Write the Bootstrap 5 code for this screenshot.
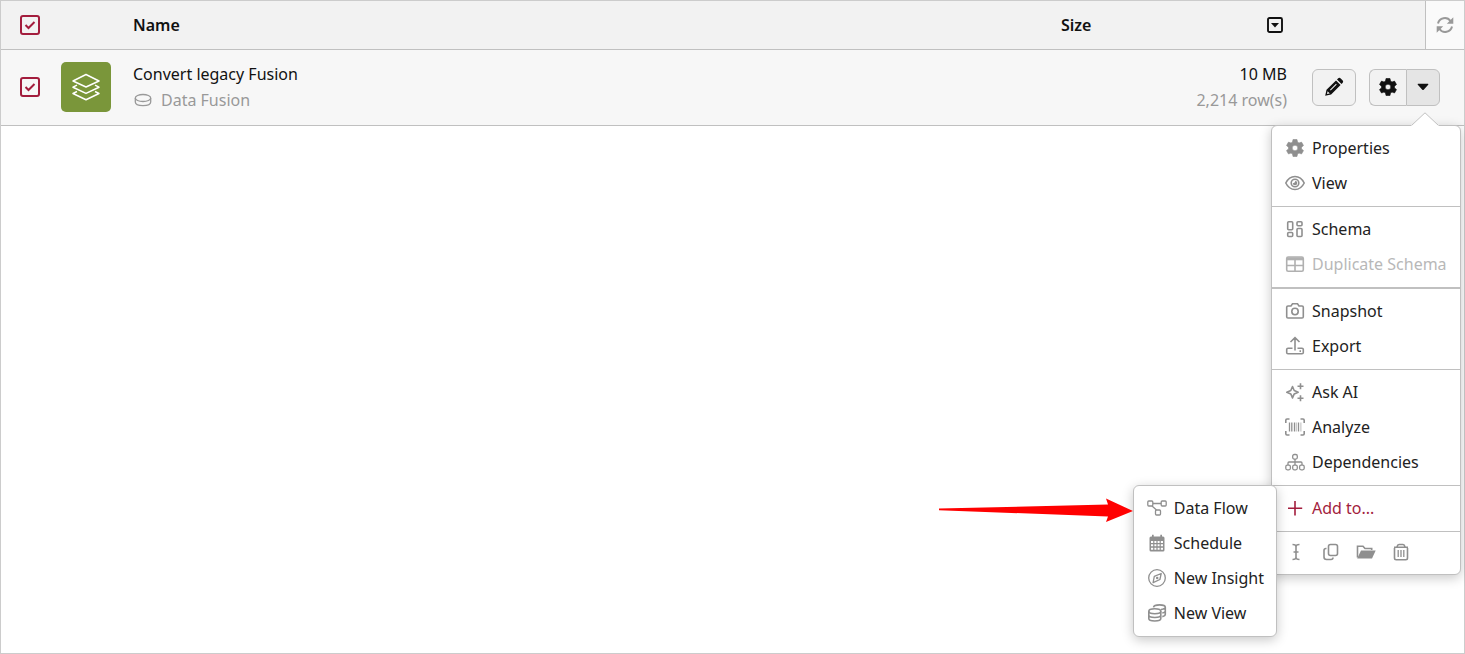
<!DOCTYPE html>
<html lang="en">
<head>
<meta charset="utf-8">
<meta name="viewport" content="width=device-width, initial-scale=1">
<title>Datasets</title>
<link href="https://cdn.jsdelivr.net/npm/bootstrap@5.3.0/dist/css/bootstrap.min.css" rel="stylesheet">
<style>
  :root { --line: #c0c0c0; --ink: #111; --quiet: #999; --accent: #a31d3d; }
  body { font-family: "Noto Sans", "Open Sans", sans-serif; font-size: 16px; line-height: 26px; color: var(--ink); }
  svg { display: block; flex: none; }
  .ico { width: 20px; height: 20px; fill: none; stroke: currentColor; stroke-width: 1.6; }
  .fine { stroke-width: 1.3; }
  .solid { fill: currentColor; stroke: none; }
  .pane { border: 1px solid #ccc; }
  .data-list { table-layout: fixed; color: var(--ink); }
  .data-list > * > tr > * { padding: 0; vertical-align: middle; background: #f7f7f7; border-bottom: 1px solid var(--line); box-shadow: none; color: var(--ink); }
  .data-list thead th { height: 48px; background: #f2f2f2; font-weight: 600; }
  .data-list tbody td { height: 76px; }
  .data-list .cell-refresh { background: #fafafa; border-left: 1px solid var(--line); }
  .col-tick { width: 60px; } .col-type { width: 72px; } .col-size { width: 226px; } .col-act { width: 138px; } .col-refresh { width: 39px; }
  .tick { appearance: none; display: block; width: 20px; height: 20px; margin: 0 0 0 19px; border: 2px solid var(--accent); border-radius: 3px; }
  .tick:checked { background: url("data:image/svg+xml,%3Csvg xmlns='http://www.w3.org/2000/svg' viewBox='0 0 16 16'%3E%3Cpath d='M3.5 8l3 3 6-6' fill='none' stroke='%23a31d3d' stroke-width='2'/%3E%3C/svg%3E") center / 16px; }
  .tile { width: 50px; height: 50px; border-radius: 5px; background: #7a963a; color: #fff; }
  .bare { padding: 0; border: 0; background: none; color: inherit; }
  .quiet { color: var(--quiet); }
  .tools { gap: 13px; }
  .tool { height: 37px; padding: 0; border: 1px solid var(--line); border-radius: 6px; background: #f2f2f2; color: var(--ink); }
  .tool.tool-open { background: #e5e5e5; }
  .tool-edit { width: 44px; } .tool-gear { width: 37px; } .tool-more { width: 34px; }
  .popup { position: absolute; background: #fff; border: 1px solid var(--line); border-radius: 6px; box-shadow: 0 3px 12px rgba(0,0,0,.22); white-space: nowrap; color: #222; }
  .popup-main { top: 56px; right: -21px; min-width: 190px; z-index: 5; }
  .popup-sub { top: -1px; right: calc(100% - 5px); min-width: 144px; z-index: 6; }
  .peak { position: absolute; top: -14px; right: 21px; }
  .group { padding: 5px 0; }
  .group + .group, .quick { border-top: 1px solid var(--line); }
  .group + .group-strong { border-top-width: 2px; }
  .entry { display: flex; align-items: center; gap: 7px; width: 100%; height: 35px; padding: 0 12px 0 13px; border: 0; background: none; color: inherit; text-align: left; }
  .entry .ico, .quick .ico { color: #8f8f8f; }
  .entry:disabled { color: #b8b8b8; } .entry:disabled .ico { color: #b0b0b0; }
  .entry-accent, .entry-accent .ico { color: var(--accent); }
  .quick { height: 43px; padding: 0 0 2px 6px; }
  .quick button { width: 35px; height: 35px; }
  .pointer { position: absolute; right: 100%; top: 12px; }
</style>
</head>
<body>
<svg width="0" height="0" class="position-absolute" aria-hidden="true">
  <symbol id="gear" viewBox="0 0 20 20"><path fill-rule="evenodd" d="M8 1.500h4l.5 2.600 1.500.9 2.500-.9 2 3.400-2 1.700v1.700l2 1.700-2 3.400-2.500-.9-1.500.9-.5 2.500H8l-.5-2.500L6 15.100l-2.500.9-2-3.400 2-1.700V9.200l-2-1.700 2-3.400L6 5l1.500-.9zM10 7.200a2.800 2.800 0 1 0 0 5.600 2.800 2.800 0 0 0 0-5.600z" stroke="currentColor" stroke-width=".6" stroke-linejoin="round"/></symbol>
</svg>
<main class="pane min-vh-100">
  <table class="table data-list mb-0 w-100">
    <colgroup><col class="col-tick"><col class="col-type"><col><col class="col-size"><col class="col-act"><col class="col-refresh"></colgroup>
    <thead>
      <tr>
        <th><input class="tick" type="checkbox" checked aria-label="Select all"></th>
        <th></th>
        <th scope="col">Name</th>
        <th scope="col"><div class="d-flex justify-content-between align-items-center pe-1">Size
          <button class="bare" type="button" aria-label="Filter size"><svg width="16" height="16" viewBox="0 0 16 16"><rect x="1" y="1" width="14" height="14" rx="1.500" fill="none" stroke="#111" stroke-width="1.900"/><path d="M4 6h8l-4 4.500z" fill="#111"/></svg></button></div></th>
        <th></th>
        <th class="cell-refresh"><button class="bare quiet d-block mx-auto" type="button" aria-label="Refresh"><svg width="18" height="18" viewBox="0 0 18 18" fill="none" stroke="currentColor" stroke-width="2"><path d="M2 7.500A7 7 0 0 1 14.500 5M16 10.500A7 7 0 0 1 3.500 13"/><path d="M17.300 1.200v6.500h-6.500zM.7 16.800v-6.500h6.500z" fill="currentColor" stroke="none"/></svg></button></th>
      </tr>
    </thead>
    <tbody>
      <tr>
        <td><input class="tick" type="checkbox" checked aria-label="Select Convert legacy Fusion"></td>
        <td><div class="tile d-flex align-items-center justify-content-center"><svg width="28" height="28" viewBox="0 0 28 28" fill="none" stroke="currentColor" stroke-width="1.500" stroke-linejoin="round"><path d="M14 1.500L27 8l-13 6L1 8z"/><path d="M5 12.200L1 14.200l13 6.200 13-6.200-4-2M5 18.500l-4 2 13 6.200 13-6.200-4-2"/></svg></div></td>
        <td><div>Convert legacy Fusion</div>
          <div class="quiet d-flex align-items-center gap-2"><svg class="ico fine" viewBox="0 0 20 20"><ellipse cx="10" cy="8" rx="7.700" ry="3.500"/><path d="M2.300 8v4c0 4.800 15.400 4.800 15.400 0V8"/></svg>Data Fusion</div></td>
        <td class="text-end"><div>10 MB</div><div class="quiet">2,214 row(s)</div></td>
        <td colspan="2">
          <div class="tools d-flex justify-content-end pe-4">
            <button class="tool tool-edit d-flex align-items-center justify-content-center" type="button" aria-label="Edit"><svg width="20" height="20" viewBox="0 0 20 20"><path fill="currentColor" fill-rule="evenodd" d="M1.200 18.800l1.300-6L12 3.400 16.600 8l-9.500 9.500zM3.600 14.200l-.6 2.800 2.800-.6zM6 12.700l.7.700 6-6-.7-.7zM13 2.500l1-1c.9-.9 1.900-.9 2.700 0l1.800 1.800c.9.800.9 1.800 0 2.700l-1 1z"/></svg></button>
            <div class="d-flex position-relative">
              <button class="tool tool-gear rounded-end-0 border-end-0 d-flex align-items-center justify-content-center" type="button" aria-label="Settings"><svg class="ico solid"><use href="#gear"/></svg></button>
              <button class="tool tool-more tool-open rounded-start-0 d-flex align-items-center justify-content-center" type="button" aria-label="More actions" aria-expanded="true"><svg width="12" height="8" viewBox="0 0 12 8"><path fill="currentColor" d="M1.200.8h9.600q1 .2.400 1L6.700 6.700q-.7.600-1.400 0L.8 1.800q-.6-.8.400-1z"/></svg></button>
              <div class="popup popup-main">
                <svg class="peak" width="28" height="15" viewBox="0 0 28 15"><path d="M0 13.500L14 .7l14 12.800V15H0z" fill="#fff"/><path d="M.5 13.500L14 .8l13.500 12.700" fill="none" stroke="#c0c0c0"/></svg>
                <div class="group">
                  <button class="entry" type="button"><svg class="ico solid"><use href="#gear"/></svg>Properties</button>
                  <button class="entry" type="button"><svg class="ico" viewBox="0 0 20 20"><path d="M.8 10C5 1.300 15 1.300 19.200 10 15 18.700 5 18.700.8 10z"/><circle cx="10" cy="10" r="3.800"/><path class="solid" d="M7.700 10.200a2.300 2.300 0 1 0 2.500-2.500c.2 1.500-.9 2.500-2.500 2.500z"/></svg>View</button>
                </div>
                <div class="group">
                  <button class="entry" type="button"><svg class="ico" viewBox="0 0 20 20"><rect x="2.700" y="2.700" width="5" height="8" rx="1"/><rect x="2.700" y="13.500" width="5" height="4" rx="1"/><rect x="12" y="2.700" width="5" height="4" rx="1"/><rect x="12" y="9.500" width="5" height="8" rx="1"/></svg>Schema</button>
                  <button class="entry" type="button" disabled><svg class="ico" viewBox="0 0 20 20"><rect x="1.700" y="3" width="16.600" height="14.300" rx="1.500"/><path d="M2 4.800h16" stroke-width="3"/><path d="M2 11.500h16M10 5v12"/></svg>Duplicate Schema</button>
                </div>
                <div class="group group-strong">
                  <button class="entry" type="button"><svg class="ico" viewBox="0 0 20 20"><path d="M3 5h3l1.500-2.300h5L14 5h3q1.300 0 1.300 1.300v9.400q0 1.300-1.300 1.300H3q-1.300 0-1.300-1.300V6.300Q1.700 5 3 5z"/><circle cx="10" cy="10.500" r="3.200"/></svg>Snapshot</button>
                  <button class="entry" type="button"><svg class="ico" viewBox="0 0 20 20"><path d="M10 14.500V2M5.500 6L10 1.700 14.500 6M7.500 12.300H3q-1.300 0-1.300 1.300v2.800q0 1.300 1.300 1.300h14q1.300 0 1.300-1.300v-2.800q0-1.300-1.300-1.300h-4.500"/><path d="M14.500 15.100h1.500"/></svg>Export</button>
                </div>
                <div class="group">
                  <button class="entry" type="button"><svg class="ico" viewBox="0 0 20 20"><path d="M7.500 4.500l1.700 4 4 1.700-4 1.700-1.700 4-1.700-4-4-1.700 4-1.700z" stroke-linejoin="round"/><path d="M15.500 1.200v6M12.500 4.200h6M15.500 13.200v6M12.500 16.200h6"/></svg>Ask AI</button>
                  <button class="entry" type="button"><svg class="ico" viewBox="0 0 20 20"><path d="M4.500 2H2Q.8 2 .8 3.200V6M15.500 2H18q1.200 0 1.200 1.200V6M.8 14v2.800Q.8 18 2 18h2.500M19.200 14v2.800q0 1.200-1.200 1.200h-2.500"/><path d="M4.500 5.500v9M6.800 5.500v9M9.500 5.500v9M13.500 5.500v9" stroke-width="1.300"/><path d="M15.900 5.500v9M11.300 5.500v9" stroke-width=".6"/></svg>Analyze</button>
                  <button class="entry" type="button"><svg class="ico fine" viewBox="0 0 20 20"><rect x="7.700" y="2.500" width="4.600" height="4.600" rx="1.500"/><rect x=".8" y="13.200" width="4.600" height="4.600" rx="1.500"/><rect x="7.700" y="13.200" width="4.600" height="4.600" rx="1.500"/><rect x="14.600" y="13.200" width="4.600" height="4.600" rx="1.500"/><path d="M10 7v6M3 13v-2q0-1 1-1h12q1 0 1 1v2"/></svg>Dependencies</button>
                </div>
                <div class="group position-relative">
                  <button class="entry entry-accent" type="button" aria-expanded="true"><svg class="ico" viewBox="0 0 20 20"><path d="M10 3v14.500M3 10.200h14.200"/></svg>Add to...</button>
                  <div class="popup popup-sub">
                    <svg class="pointer" width="196" height="26" viewBox="0 0 196 26" aria-hidden="true"><path d="M1 10.600L170 6.500l-2-6L195 13l-27 11 2-5.500L1 12.200z" fill="#f00"/></svg>
                    <div class="group">
                      <button class="entry" type="button"><svg class="ico fine" viewBox="0 0 20 20"><rect x=".8" y="3" width="5" height="5" rx="1"/><rect x="14.200" y="3" width="5" height="5" rx="1"/><rect x="8.500" y="12" width="5" height="5" rx="1"/><path d="M6 5.500h8M5 8l4.500 4"/></svg>Data Flow</button>
                      <button class="entry" type="button"><svg class="ico" viewBox="0 0 20 20"><path class="solid" fill-rule="evenodd" d="M2.500 5q0-1.500 1.500-1.500h1V1.700h1.700v1.800h6.600V1.700H15v1.800h1q1.500 0 1.500 1.500v12q0 1.500-1.500 1.500H4q-1.500 0-1.500-1.500zM4 8v2h2.200V8zm3.400 0v2h2V8zm3.200 0v2h2V8zm3.200 0v2H16V8zM4 11.300v2h2.200v-2zm3.400 0v2h2v-2zm3.200 0v2h2v-2zm3.200 0v2H16v-2zM4 14.700v2h2.200v-2zm3.400 0v2h2v-2zm3.200 0v2h2v-2zm3.200 0v2H16v-2z"/></svg>Schedule</button>
                      <button class="entry" type="button"><svg class="ico fine" viewBox="0 0 20 20"><circle cx="10" cy="10" r="8.300"/><path d="M14.200 5.500l-1.300 6-6.800 3.200 1.200-6.300z" stroke-linejoin="round"/><circle cx="10.200" cy="10" r=".6"/></svg>New Insight</button>
                      <button class="entry" type="button"><svg class="ico" viewBox="0 0 20 20"><ellipse cx="7.800" cy="8.300" rx="6" ry="2.500"/><path d="M1.800 8.300v7.200c0 3.300 12 3.300 12 0V8.300M1.800 12c0 3.300 12 3.300 12 0M6.500 4.300C7 1 18.300 1 18.300 4.300v7c0 1-1.500 2-3 2.300M6.500 4.300M14 6.500c2.500-.3 4.300-1 4.300-2.200M15.300 10c1.500-.3 3-1 3-2"/></svg>New View</button>
                    </div>
                  </div>
                </div>
                <div class="quick d-flex align-items-center">
                  <button class="bare d-flex align-items-center justify-content-center" type="button" aria-label="Rename"><svg class="ico" viewBox="0 0 20 20"><path d="M6.500 2.500c2.500 0 3.500.8 3.500 2v11c0 1.200-1 2-3.500 2M13.500 2.500c-2.500 0-3.500.8-3.500 2M10 15.500c0 1.200 1 2 3.500 2M7.500 10h5"/></svg></button>
                  <button class="bare d-flex align-items-center justify-content-center" type="button" aria-label="Copy"><svg class="ico" viewBox="0 0 20 20"><rect x="7.500" y="2.500" width="9" height="11" rx="2"/><path d="M5.500 6.500H5q-2 0-2 2V15q0 2.500 2.500 2.500H10q2 0 2-2"/></svg></button>
                  <button class="bare d-flex align-items-center justify-content-center" type="button" aria-label="Move to folder"><svg class="ico" viewBox="0 0 20 20"><path d="M1.500 15.500V4.200h5.500l2 2.300h6.700V8"/><path class="solid" d="M5 8.500h14.700L16 16.500H1.200z"/></svg></button>
                  <button class="bare d-flex align-items-center justify-content-center" type="button" aria-label="Delete"><svg class="ico" viewBox="0 0 20 20"><path d="M3.500 6v10q0 1.700 1.700 1.700h9.600q1.700 0 1.700-1.700V6M3 5.200h14M6 4.800Q6.500 2.500 8 2.500h4q1.500 0 2 2.300"/><path d="M7.200 8v7M10 8v7M12.800 8v7" stroke-width="1.300"/></svg></button>
                </div>
              </div>
            </div>
          </div>
        </td>
      </tr>
    </tbody>
  </table>
</main>
<script src="https://cdn.jsdelivr.net/npm/bootstrap@5.3.0/dist/js/bootstrap.bundle.min.js"></script>
</body>
</html>
